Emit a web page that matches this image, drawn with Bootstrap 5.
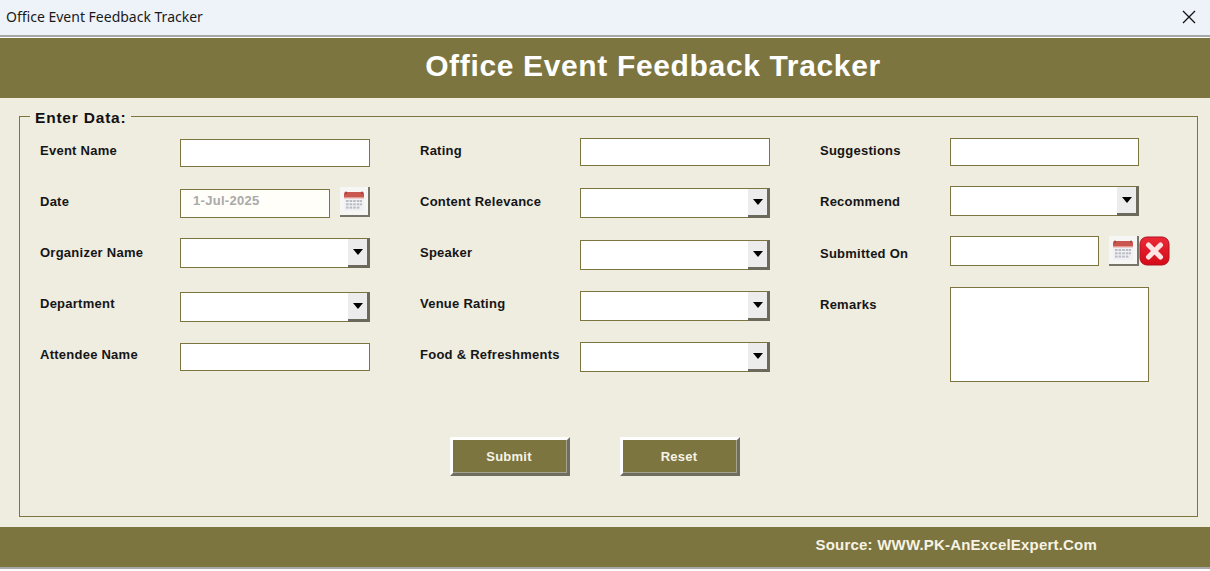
<!DOCTYPE html>
<html lang="en">
<head>
<meta charset="utf-8">
<title>Office Event Feedback Tracker</title>
<link href="https://cdn.jsdelivr.net/npm/bootstrap@5.3.0/dist/css/bootstrap.min.css" rel="stylesheet">
<style>
html,body{height:571px;overflow:hidden}
body{width:1210px;background:#fff;font-family:"Liberation Sans",Arial,sans-serif;color:#111}
.winbar{height:35px;background:#eef3fa;font-family:"Noto Sans",sans-serif;font-size:14px;color:#1a1a1a;padding:0 14px 2px 6px}
.winline{height:2px;background:#a8a8a8;margin-bottom:1px}
.headbar{height:60px;background:#7d7540;color:#fff;font-size:30px;font-weight:700;letter-spacing:.65px;padding:0 0 6px 96px}
.formbody{height:429px;background:#efece0;padding:18px 12px 10px 19px}
.entry{height:401px;border:1px solid #7d7540;margin:0;padding:0 0 0 20px;min-width:0;position:relative}
.entry legend{float:none;width:auto;margin:0 0 0 11px;padding:0 5px;font-size:15.5px;font-weight:700;letter-spacing:.8px;line-height:18px;position:absolute;top:-8px;left:-1px;background:#efece0}
.fieldcols{padding-top:8px}
.fcol{display:flex}
.fcol1{width:380px}.fcol2{width:400px}
.labs1{width:140px}.labs2{width:160px}.labs3{width:130px}
.lab{height:51px;display:flex;align-items:center;font-size:13px;font-weight:700;letter-spacing:.25px;margin:0;color:#151515}
.labs3 .lab:nth-child(3){margin-top:1px;height:51px}
.ctrls{display:flex;flex-direction:column;align-items:flex-start;padding-top:13px}
.form-control.box{border:1px solid #7d7540;border-radius:0;background:#fff;padding:0 12px;font-size:13px;box-shadow:none;height:28px;min-height:0}
.form-control.boxdate{height:29px;width:150px;background:#fffef8;color:#a9a9a9;font-weight:700;letter-spacing:.3px;padding-bottom:6px}
.form-control.boxshort{width:149px;height:30px}
.form-control.boxnote{width:199px;height:95px;resize:none}
.w190{width:190px}.w189{width:189px}
.combo{height:30px;flex-wrap:nowrap}
.combo .form-control.box{height:30px;border-right:0}
.dropbtn{width:22px;height:30px;padding:0;background:#ececec;border:0;border-top:1px solid #7d7540;border-right:3px solid #6b695c;border-bottom:3px solid #6b695c;border-radius:0;display:flex;align-items:center;justify-content:center}
.tool{width:30px;height:30px;padding:0;background:#f6f6f4;border:0;border-right:2px solid #77756a;border-bottom:2px solid #77756a;border-radius:0;display:flex;align-items:center;justify-content:center}
.toolx{width:31px;height:30px;padding:0;border:0;background:none;display:block}
.gap21{margin-top:21px}.gap22{margin-top:22px}.gap20{margin-top:20px}.gap24{margin-top:24px}.gap1{margin-top:1px}
.lift2{margin-top:-2px}
.ml10{margin-left:10px}
.actions{padding-top:55px;padding-left:410px;gap:50px}
.actbtn{width:120px;height:39px;background:#7d7540;color:#f6f3e4;border:0;border-radius:0;font-size:13px;font-weight:700;letter-spacing:.25px;padding:0 2px 0 0;border-top:3px solid #fff;border-left:3px solid #fff;border-right:3px solid #6f6d60;border-bottom:3px solid #6f6d60;box-shadow:inset -1px -1px 0 #a5a28f}
.actbtn:hover{background:#7d7540;color:#f6f3e4}
.footbar{height:40px;background:#7d7540;color:#f6f3e4;font-size:15px;font-weight:700;letter-spacing:.2px;padding:0 113px 3px 0}
.footline{height:2px;background:#a8a8a8;margin-bottom:2px}
</style>
</head>
<body>
<div class="winbar d-flex align-items-center justify-content-between">
  <span>Office Event Feedback Tracker</span>
  <svg width="14" height="14" viewBox="0 0 14 14" aria-label="Close"><path d="M1 1L13 13M13 1L1 13" stroke="#111" stroke-width="1.3" fill="none"/></svg>
</div>
<div class="winline"></div>
<header class="headbar d-flex align-items-center justify-content-center">Office Event Feedback Tracker</header>
<main class="formbody">
  <fieldset class="entry">
    <legend>Enter Data:</legend>
    <div class="d-flex fieldcols">
      <div class="fcol fcol1">
        <div class="labs1">
          <label class="lab">Event Name</label>
          <label class="lab">Date</label>
          <label class="lab">Organizer Name</label>
          <label class="lab">Department</label>
          <label class="lab">Attendee Name</label>
        </div>
        <div class="ctrls">
          <input class="form-control box w190 gap1" type="text">
          <div class="d-flex gap22 align-items-start">
            <input class="form-control box boxdate" type="text" value="1-Jul-2025">
            <button class="btn tool ml10 lift2" type="button" aria-label="Calendar"><svg width="24" height="24" viewBox="0 0 24 24"><rect x="2" y="3" width="20" height="19" rx="1.5" fill="#f1f1f3"/><rect x="2" y="3" width="20" height="6" rx="1.5" fill="#c9574f"/><rect x="2" y="8" width="20" height="1.4" fill="#e39a90"/><path d="M4 2.5V5M20 2.5V5" stroke="#8f2f2a" stroke-width="1"/><g fill="#b9bcc4"><rect x="4" y="11" width="2.6" height="2"/><rect x="7.6" y="11" width="2.6" height="2"/><rect x="11.2" y="11" width="2.6" height="2"/><rect x="14.8" y="11" width="2.6" height="2"/><rect x="18" y="11" width="2" height="2"/><rect x="4" y="14.3" width="2.6" height="2"/><rect x="7.6" y="14.3" width="2.6" height="2"/><rect x="11.2" y="14.3" width="2.6" height="2"/><rect x="14.8" y="14.3" width="2.6" height="2"/><rect x="18" y="14.3" width="2" height="2"/><rect x="4" y="17.6" width="2.6" height="2"/><rect x="7.6" y="17.6" width="2.6" height="2"/><rect x="11.2" y="17.6" width="2.6" height="2"/><rect x="14.8" y="17.6" width="2.6" height="2"/></g></svg></button>
          </div>
          <div class="input-group combo w190 gap20"><input class="form-control box" type="text"><button class="btn dropbtn" type="button" aria-label="Open"><svg width="10" height="6" viewBox="0 0 10 6"><path d="M0 0H10L5 6Z" fill="#000"/></svg></button></div>
          <div class="input-group combo w190 gap24"><input class="form-control box" type="text"><button class="btn dropbtn" type="button" aria-label="Open"><svg width="10" height="6" viewBox="0 0 10 6"><path d="M0 0H10L5 6Z" fill="#000"/></svg></button></div>
          <input class="form-control box w190 gap21" type="text">
        </div>
      </div>
      <div class="fcol fcol2">
        <div class="labs2">
          <label class="lab">Rating</label>
          <label class="lab">Content Relevance</label>
          <label class="lab">Speaker</label>
          <label class="lab">Venue Rating</label>
          <label class="lab">Food &amp; Refreshments</label>
        </div>
        <div class="ctrls">
          <input class="form-control box w190" type="text">
          <div class="input-group combo w190 gap22"><input class="form-control box" type="text"><button class="btn dropbtn" type="button" aria-label="Open"><svg width="10" height="6" viewBox="0 0 10 6"><path d="M0 0H10L5 6Z" fill="#000"/></svg></button></div>
          <div class="input-group combo w190 gap22"><input class="form-control box" type="text"><button class="btn dropbtn" type="button" aria-label="Open"><svg width="10" height="6" viewBox="0 0 10 6"><path d="M0 0H10L5 6Z" fill="#000"/></svg></button></div>
          <div class="input-group combo w190 gap21"><input class="form-control box" type="text"><button class="btn dropbtn" type="button" aria-label="Open"><svg width="10" height="6" viewBox="0 0 10 6"><path d="M0 0H10L5 6Z" fill="#000"/></svg></button></div>
          <div class="input-group combo w190 gap21"><input class="form-control box" type="text"><button class="btn dropbtn" type="button" aria-label="Open"><svg width="10" height="6" viewBox="0 0 10 6"><path d="M0 0H10L5 6Z" fill="#000"/></svg></button></div>
        </div>
      </div>
      <div class="fcol">
        <div class="labs3">
          <label class="lab">Suggestions</label>
          <label class="lab">Recommend</label>
          <label class="lab">Submitted On</label>
          <label class="lab">Remarks</label>
        </div>
        <div class="ctrls">
          <input class="form-control box w189" type="text">
          <div class="input-group combo w189 gap20"><input class="form-control box" type="text"><button class="btn dropbtn" type="button" aria-label="Open"><svg width="10" height="6" viewBox="0 0 10 6"><path d="M0 0H10L5 6Z" fill="#000"/></svg></button></div>
          <div class="d-flex gap20">
            <input class="form-control box boxshort" type="text">
            <button class="btn tool ml10" type="button" aria-label="Calendar"><svg width="24" height="24" viewBox="0 0 24 24"><rect x="2" y="3" width="20" height="19" rx="1.5" fill="#f1f1f3"/><rect x="2" y="3" width="20" height="6" rx="1.5" fill="#c9574f"/><rect x="2" y="8" width="20" height="1.4" fill="#e39a90"/><path d="M4 2.5V5M20 2.5V5" stroke="#8f2f2a" stroke-width="1"/><g fill="#b9bcc4"><rect x="4" y="11" width="2.6" height="2"/><rect x="7.6" y="11" width="2.6" height="2"/><rect x="11.2" y="11" width="2.6" height="2"/><rect x="14.8" y="11" width="2.6" height="2"/><rect x="18" y="11" width="2" height="2"/><rect x="4" y="14.3" width="2.6" height="2"/><rect x="7.6" y="14.3" width="2.6" height="2"/><rect x="11.2" y="14.3" width="2.6" height="2"/><rect x="14.8" y="14.3" width="2.6" height="2"/><rect x="18" y="14.3" width="2" height="2"/><rect x="4" y="17.6" width="2.6" height="2"/><rect x="7.6" y="17.6" width="2.6" height="2"/><rect x="11.2" y="17.6" width="2.6" height="2"/><rect x="14.8" y="17.6" width="2.6" height="2"/></g></svg></button>
            <button class="btn toolx" type="button" aria-label="Clear"><svg width="31" height="30" viewBox="0 0 31 30"><defs><linearGradient id="rg" x1="0" y1="0" x2="0" y2="1"><stop offset="0" stop-color="#ea2a38"/><stop offset="1" stop-color="#d60a18"/></linearGradient></defs><rect x="1" y="1" width="29" height="28" rx="7" fill="url(#rg)" stroke="#b0101c"/><path d="M9.5 9L21.5 21M21.5 9L9.5 21" stroke="#fde4e2" stroke-width="5" stroke-linecap="round"/></svg></button>
          </div>
          <textarea class="form-control box boxnote gap21"></textarea>
        </div>
      </div>
    </div>
    <div class="d-flex actions">
      <button class="btn actbtn" type="button">Submit</button>
      <button class="btn actbtn" type="button">Reset</button>
    </div>
  </fieldset>
</main>
<footer class="footbar d-flex align-items-center justify-content-end">Source: WWW.PK-AnExcelExpert.Com</footer>
<div class="footline"></div>
</body>
</html>
